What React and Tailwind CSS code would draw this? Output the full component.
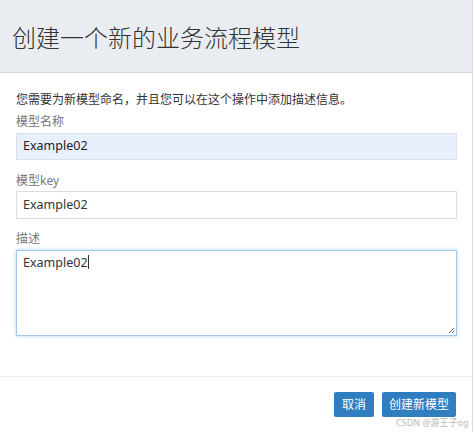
export default function App() {
  const cjk = { fontFamily: '"Noto Sans", "Noto Sans CJK SC", sans-serif' };
  return (
    <div className="relative w-[474px] h-[432px] bg-white overflow-hidden" style={cjk}>
      <div className="w-[473px] h-[432px] border-r border-[#d9d9d9] flex flex-col">
        <div className="h-[73px] bg-[#e9edf1] border-b border-[#d8dbde] pl-[12px] pt-[22px]">
          <h1 className="text-[24px] leading-[32px] text-[#333] font-light">创建一个新的业务流程模型</h1>
        </div>
        <div className="px-4 pt-[18px]">
          <p className="text-[12px] leading-[18px] text-[#333] mb-[4px]">您需要为新模型命名，并且您可以在这个操作中添加描述信息。</p>
          <label className="block text-[12px] leading-[18px] text-[#777] mb-[2px]">模型名称</label>
          <div className="h-[27px] w-[441px] bg-[#e8f0fe] border border-[#dcdfe3] px-[6px] flex items-center text-[12.5px] text-[#222]">Example02</div>
          <label className="block text-[12px] leading-[18px] text-[#777] mt-[12px] mb-[1px]">模型key</label>
          <div className="h-[28px] w-[441px] bg-white border border-[#dddddd] px-[6px] flex items-center text-[12.5px] text-[#333]">Example02</div>
          <label className="block text-[12px] leading-[18px] text-[#777] mt-[11px] mb-[2px]">描述</label>
          <div className="relative h-[86px] w-[441px] bg-white border border-[#9ec9ec] shadow-[0_0_4px_rgba(102,175,233,0.5)] px-[6px] pt-[3px] text-[12.5px] text-[#333] leading-[18px]">
            <span>Example02</span><span className="inline-block w-px h-[14px] bg-[#333] align-[-2px]"></span>
            <svg className="absolute right-[1px] bottom-[1px]" width="8" height="8" viewBox="0 0 8 8">
              <path d="M7 2 L2 7 M7 5 L5 7" stroke="#666" strokeWidth="1" />
            </svg>
          </div>
        </div>
        <div className="mt-[40px] border-t border-[#eeeeee] pt-[15px] pr-[16px] flex justify-end gap-[8px]">
          <button className="h-[25px] px-[8px] bg-[#2f7ebf] rounded-[2px] text-white text-[12px] leading-[25px]">取消</button>
          <button className="h-[25px] px-[7px] bg-[#2f7ebf] rounded-[2px] text-white text-[12px] leading-[25px]">创建新模型</button>
        </div>
      </div>
      <div className="absolute left-[396px] top-[416px] text-[9px] leading-[14px] text-[#b8b8b8] whitespace-nowrap">CSDN @游王子og</div>
    </div>
  );
}
